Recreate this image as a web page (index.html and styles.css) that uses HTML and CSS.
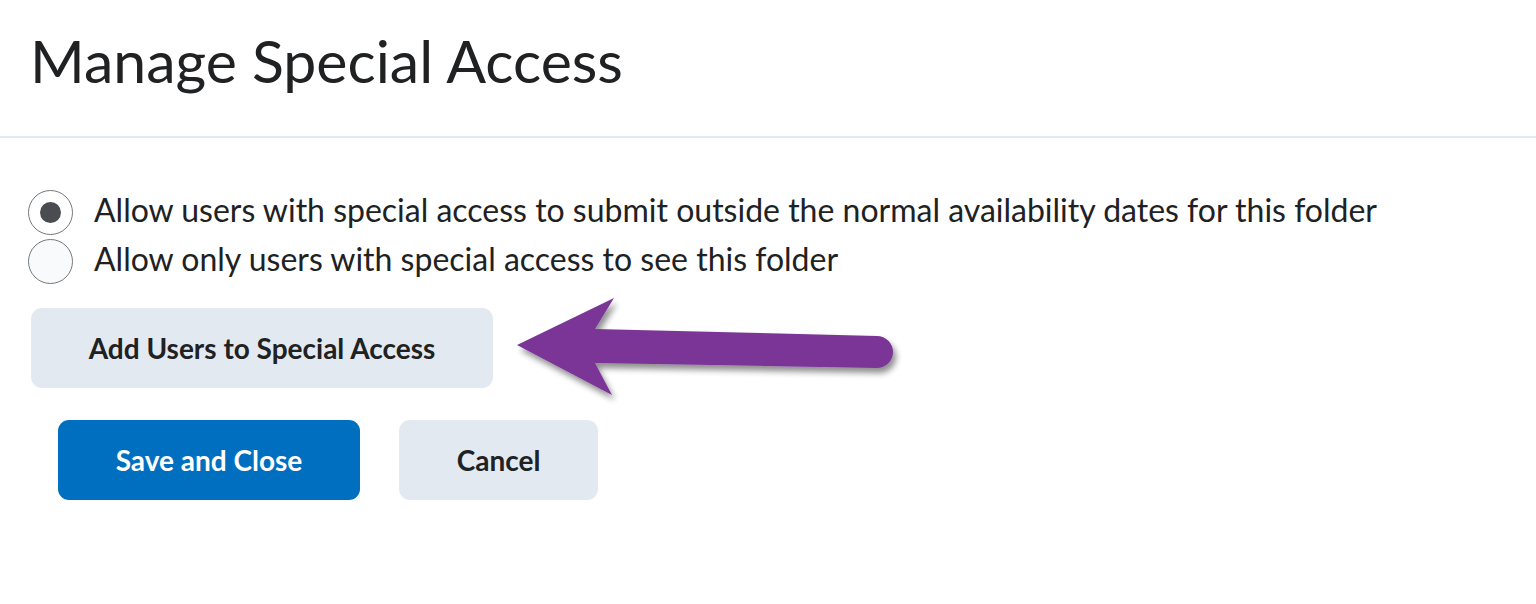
FILE: index.html
```html
<!DOCTYPE html>
<html>
<head>
<meta charset="utf-8">
<link rel="stylesheet" href="styles.css">
</head>
<body>
<header class="page-header">
  <h1 class="title">Manage Special Access</h1>
</header>
<main class="content">
  <div class="radios">
    <label class="radio-row">
      <span class="radio checked"><span class="dot"></span></span>
      <span class="radio-label">Allow users with special access to submit outside the normal availability dates for this folder</span>
    </label>
    <label class="radio-row">
      <span class="radio"></span>
      <span class="radio-label">Allow only users with special access to see this folder</span>
    </label>
  </div>
  <div class="add-wrap">
    <button class="btn btn-secondary btn-add">Add Users to Special Access</button>
    <svg class="arrow" width="420" height="130" viewBox="500 285 420 130">
      <defs>
        <filter id="sh" x="-10%" y="-30%" width="130%" height="170%">
          <feGaussianBlur in="SourceAlpha" stdDeviation="3"/>
          <feOffset dx="3" dy="5" result="b"/>
          <feComponentTransfer><feFuncA type="linear" slope="0.45"/></feComponentTransfer>
          <feMerge><feMergeNode/><feMergeNode in="SourceGraphic"/></feMerge>
        </filter>
      </defs>
      <path filter="url(#sh)" fill="#7a3697" d="M517 345 L614 298 L595 329 L877 336 A16 16 0 0 1 877 368 L595 363 L612 395 Z"/>
    </svg>
  </div>
  <div class="actions">
    <button class="btn btn-primary btn-save">Save and Close</button>
    <button class="btn btn-secondary btn-cancel">Cancel</button>
  </div>
</main>
</body>
</html>
```
FILE: styles.css
```css
html, body {
  margin: 0;
  padding: 0;
  background: #ffffff;
}
body {
  font-family: Lato, "Open Sans", Arial, sans-serif;
  color: #202122;
  width: 1536px;
  height: 604px;
  overflow: hidden;
}
.page-header {
  height: 136px;
  border-bottom: 2px solid #e3e9f1;
  padding-left: 30px;
  box-sizing: content-box;
}
.title {
  margin: 0;
  padding-top: 26px;
  font-size: 59px;
  font-weight: 400;
  line-height: 70px;
  color: #202122;
}
.content {
  padding-left: 28px;
  padding-top: 51px;
}
.radios {
  display: flex;
  flex-direction: column;
  gap: 3px;
}
.radio-row {
  display: flex;
  align-items: center;
  gap: 21px;
  height: 46px;
}
.radio {
  width: 43px;
  height: 43px;
  border: 1.5px solid #74797d;
  border-radius: 50%;
  background: #f9fafb;
  display: flex;
  align-items: center;
  justify-content: center;
  flex: none;
}
.radio.checked {
  background: #ffffff;
}
.dot {
  width: 21px;
  height: 21px;
  border-radius: 50%;
  background: #494c50;
}
.radio-label {
  font-size: 32px;
  line-height: 40px;
  padding-bottom: 4px;
}
.add-wrap {
  position: relative;
  margin-top: 24px;
  padding-left: 3px;
}
.btn {
  font-family: Lato, "Open Sans", Arial, sans-serif;
  font-weight: 700;
  border: none;
  border-radius: 11px;
  height: 80px;
  font-size: 28px;
  color: #202122;
  padding: 0;
  display: inline-flex;
  align-items: center;
  justify-content: center;
}
.btn-secondary {
  background: #e3e9f1;
}
.btn-primary {
  background: #006fbf;
  color: #ffffff;
}
.btn-add {
  width: 462px;
}
.arrow {
  position: absolute;
  left: 472px;
  top: -23px;
}
.actions {
  display: flex;
  gap: 39px;
  margin-top: 32px;
  padding-left: 30px;
}
.btn-save {
  width: 302px;
}
.btn-cancel {
  width: 199px;
}
```
